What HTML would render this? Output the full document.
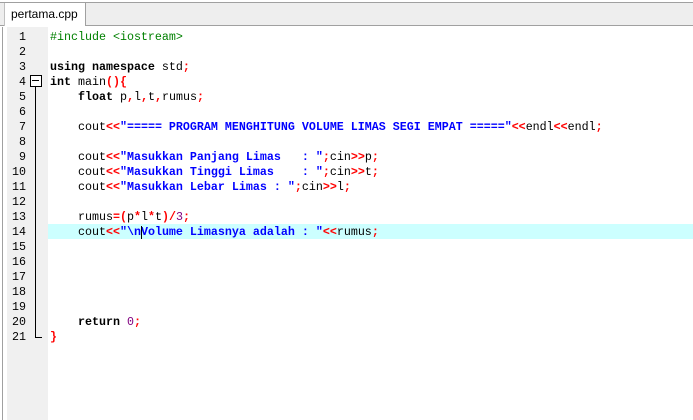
<!DOCTYPE html>
<html><head><style>
body{margin:0;width:693px;height:420px;overflow:hidden;background:#fff;position:relative;font-family:"Liberation Mono",monospace;}
#bar{position:absolute;left:0;top:2px;width:693px;height:22px;background:#eeeeee;border-top:1px solid #a0a0a0;border-bottom:1px solid #a0a0a0;}
#tab{position:absolute;left:4px;top:3px;width:80px;height:23px;background:#fff;border-left:1px solid #c0c0c0;border-right:1px solid #a0a0a0;font-family:"Liberation Sans",sans-serif;font-size:12px;line-height:22px;text-indent:6px;color:#000;}
#lline{position:absolute;left:2px;top:27px;width:1px;height:393px;background:#a0a0a0;}
#gut{position:absolute;left:7px;top:27px;width:41px;height:393px;background:#f0f0f0;}
.ln{position:absolute;left:7px;width:19px;text-align:right;font-size:11.67px;line-height:15px;color:#000;}
.cl{position:absolute;left:50px;font-size:11.67px;line-height:15px;white-space:pre;color:#000;}
#hl{position:absolute;left:48px;top:224px;width:645px;height:15px;background:#ccffff;}
b{font-weight:bold}
.r{color:#f00;font-weight:bold}.g{color:#008000}.s{color:#0000ff;font-weight:bold}.p{color:#800080}
</style></head><body>
<div id="bar"></div><div id="tab">pertama.cpp</div>
<div id="lline"></div><div id="gut"></div><div id="hl"></div>
<div style="position:absolute;left:30px;top:75px;width:10px;height:10px;border:1px solid #000;background:#fff"></div>
<div style="position:absolute;left:32px;top:80px;width:7px;height:1px;background:#000"></div>
<div style="position:absolute;left:35px;top:87px;width:1px;height:250px;background:#000"></div>
<div style="position:absolute;left:35px;top:337px;width:7px;height:1px;background:#000"></div>
<div class="ln" style="top:30px">1</div><div class="ln" style="top:45px">2</div><div class="ln" style="top:60px">3</div><div class="ln" style="top:75px">4</div><div class="ln" style="top:90px">5</div><div class="ln" style="top:105px">6</div><div class="ln" style="top:120px">7</div><div class="ln" style="top:135px">8</div><div class="ln" style="top:150px">9</div><div class="ln" style="top:165px">10</div><div class="ln" style="top:180px">11</div><div class="ln" style="top:195px">12</div><div class="ln" style="top:210px">13</div><div class="ln" style="top:225px">14</div><div class="ln" style="top:240px">15</div><div class="ln" style="top:255px">16</div><div class="ln" style="top:270px">17</div><div class="ln" style="top:285px">18</div><div class="ln" style="top:300px">19</div><div class="ln" style="top:315px">20</div><div class="ln" style="top:330px">21</div>
<div class="cl" style="top:30px"><span class="g">#include &lt;iostream&gt;</span></div>
<div class="cl" style="top:60px"><b>using namespace</b> std<span class="r">;</span></div>
<div class="cl" style="top:75px"><b>int</b> main<span class="r">(){</span></div>
<div class="cl" style="top:90px">    <b>float</b> p<span class="r">,</span>l<span class="r">,</span>t<span class="r">,</span>rumus<span class="r">;</span></div>
<div class="cl" style="top:120px">    cout<span class="r">&lt;&lt;</span><span class="s">"===== PROGRAM MENGHITUNG VOLUME LIMAS SEGI EMPAT ====="</span><span class="r">&lt;&lt;</span>endl<span class="r">&lt;&lt;</span>endl<span class="r">;</span></div>
<div class="cl" style="top:150px">    cout<span class="r">&lt;&lt;</span><span class="s">"Masukkan Panjang Limas   : "</span><span class="r">;</span>cin<span class="r">&gt;&gt;</span>p<span class="r">;</span></div>
<div class="cl" style="top:165px">    cout<span class="r">&lt;&lt;</span><span class="s">"Masukkan Tinggi Limas    : "</span><span class="r">;</span>cin<span class="r">&gt;&gt;</span>t<span class="r">;</span></div>
<div class="cl" style="top:180px">    cout<span class="r">&lt;&lt;</span><span class="s">"Masukkan Lebar Limas : "</span><span class="r">;</span>cin<span class="r">&gt;&gt;</span>l<span class="r">;</span></div>
<div class="cl" style="top:210px">    rumus<span class="r">=(</span>p<span class="r">*</span>l<span class="r">*</span>t<span class="r">)/</span><span class="p">3</span><span class="r">;</span></div>
<div class="cl" style="top:225px">    cout<span class="r">&lt;&lt;</span><span class="s">"\nVolume Limasnya adalah : "</span><span class="r">&lt;&lt;</span>rumus<span class="r">;</span></div>
<div style="position:absolute;left:141px;top:226px;width:1px;height:13px;background:#000"></div>
<div class="cl" style="top:315px">    <b>return</b> <span class="p">0</span><span class="r">;</span></div>
<div class="cl" style="top:330px"><span class="r">}</span></div>
</body></html>
